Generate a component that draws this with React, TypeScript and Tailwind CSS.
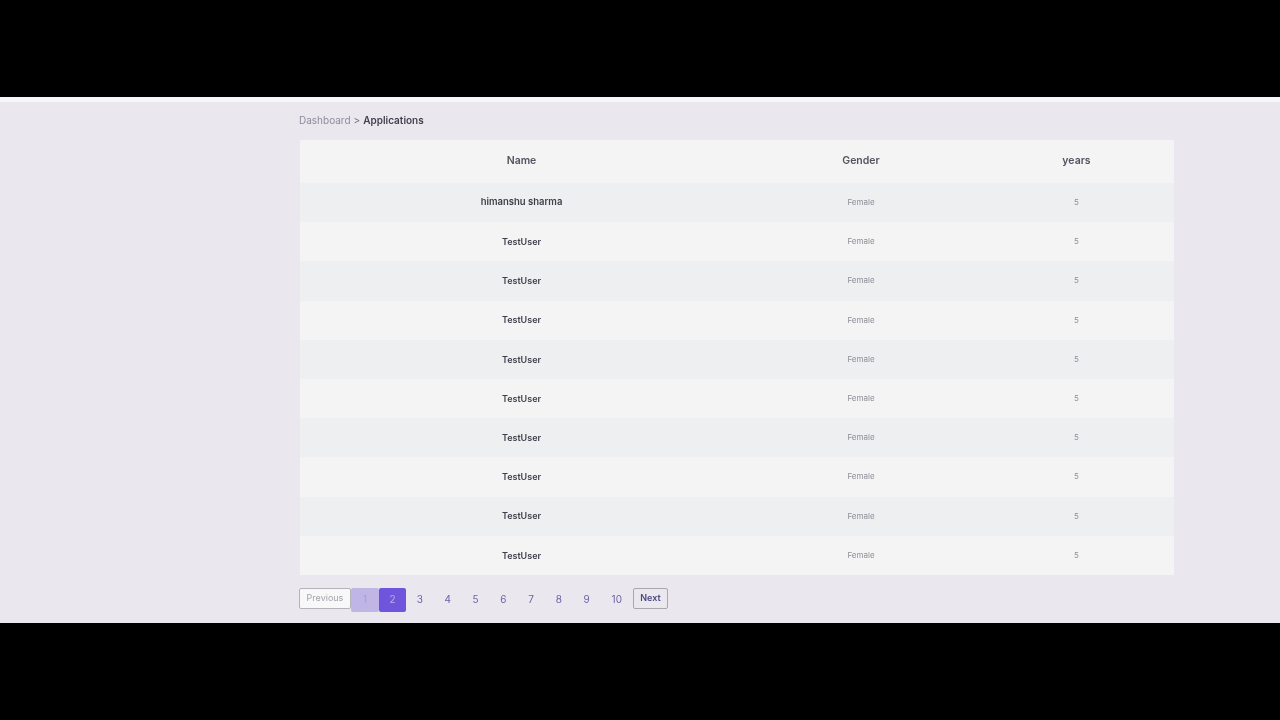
const rows = [
  "himanshu sharma",
  "TestUser",
  "TestUser",
  "TestUser",
  "TestUser",
  "TestUser",
  "TestUser",
  "TestUser",
  "TestUser",
  "TestUser",
];

const pages = ["3", "4", "5", "6", "7", "8", "9"];

export default function App() {
  return (
    <div className="h-[720px] bg-black flex flex-col font-['Inter',sans-serif] overflow-hidden">
      <div className="h-[97px] shrink-0" />
      <div className="h-[5px] shrink-0 bg-[#f8f7fa]" />
      <main className="h-[521px] shrink-0 bg-[#eae8ee] pl-[299px] pr-[106px] pt-[11px] blur-[0.5px]">
        <div className="h-[14px] flex items-center text-[10px] leading-none">
          <span className="text-[#8d8a9c]">Dashboard</span>
          <span className="text-[#6f6d7e] mx-[3px]">&gt;</span>
          <span className="font-semibold text-[#43414f]">Applications</span>
        </div>

        <div className="ml-px mt-[13px] w-[874px] bg-[#f4f4f5]">
          <div className="h-[41px] mb-[2px] flex items-center text-[10.5px] font-semibold text-[#55535f]">
            <div className="w-[443px] text-center">Name</div>
            <div className="w-[236px] text-center">Gender</div>
            <div className="w-[195px] text-center">years</div>
          </div>
          {rows.map((name, index) => (
            <div
              key={index}
              className={`h-[39.2px] flex items-center ${index % 2 === 0 ? "bg-[#eeeff1]" : "bg-[#f4f4f5]"}`}
            >
              <div className={`w-[443px] text-center font-semibold text-[#403f4c] ${index === 0 ? "text-[9.5px]" : "text-[9px]"}`}>
                {name}
              </div>
              <div className="w-[236px] pb-[1px] text-center text-[8px] text-[#8f8e98]">Female</div>
              <div className="w-[195px] pb-[1px] text-center text-[8px] text-[#8f8e98]">5</div>
            </div>
          ))}
        </div>

        <nav className="mt-[13px] flex items-start text-[10px]">
          <button className="w-[52px] h-[21px] pb-[2px] bg-[#f8f8f9] border border-[#b4b3ba] rounded-[2px] text-[9px] text-[#a3a2ab]">
            Previous
          </button>
          <div className="w-[28px] h-[24px] flex items-center justify-center bg-[#bfb6e6] rounded-[2px] text-[#a79be0]">1</div>
          <div className="w-[27px] h-[24px] flex items-center justify-center bg-[#6f55dc] rounded-[2px] text-[#b9adf0]">2</div>
          {pages.map((page) => (
            <div key={page} className="w-[27.8px] h-[23px] flex items-center justify-center text-[#6a63a8]">
              {page}
            </div>
          ))}
          <div className="w-[32.4px] h-[23px] flex items-center justify-center text-[#6a63a8]">10</div>
          <button className="w-[35px] h-[21px] pb-[2px] border border-[#a9a8b0] rounded-[2px] text-[9px] font-semibold text-[#4b4880]">
            Next
          </button>
        </nav>
      </main>
    </div>
  );
}
